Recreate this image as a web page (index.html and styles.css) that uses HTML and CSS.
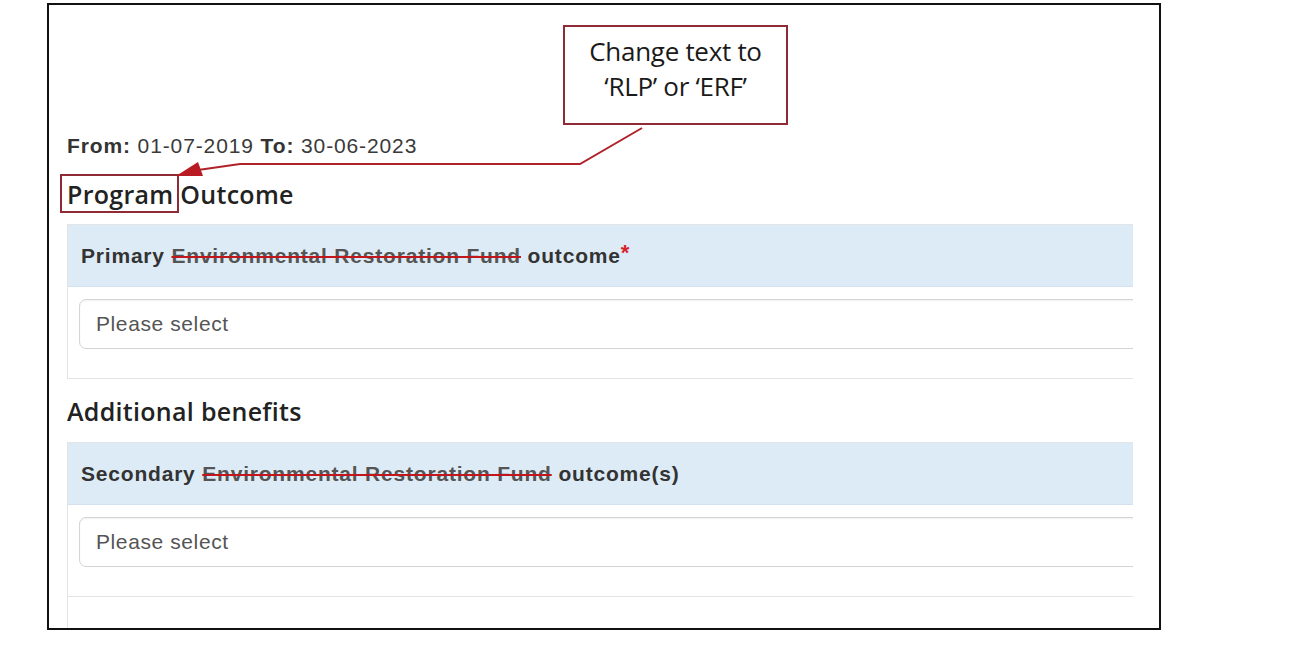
FILE: index.html
```html
<!DOCTYPE html>
<html lang="en">
<head>
<meta charset="utf-8">
<title>Program Outcome</title>
<link rel="stylesheet" href="styles.css">
</head>
<body>
<div class="frame">
  <div class="content">
    <p class="dates"><b>From:</b> 01-07-2019 <b>To:</b> 30-06-2023</p>
    <h2 class="heading">Program Outcome</h2>
    <div class="panel">
      <div class="panel-head"><span>Primary <s class="struck">Environmental Restoration Fund</s> outcome</span><span class="req">*</span></div>
      <div class="panel-body">
        <div class="select">Please select</div>
      </div>
    </div>
    <h2 class="heading heading-2">Additional benefits</h2>
    <div class="panel">
      <div class="panel-head"><span>Secondary <s class="struck">Environmental Restoration Fund</s> outcome(s)</span></div>
      <div class="panel-body">
        <div class="select">Please select</div>
      </div>
      <div class="panel-body panel-more"></div>
    </div>
  </div>
  <div class="callout">Change text to<br>‘RLP’ or ‘ERF’</div>
</div>
<svg class="annot" width="1296" height="666" viewBox="0 0 1296 666">
  <rect x="61" y="175" width="117" height="37" fill="none" stroke="#8f2a37" stroke-width="2"/>
  <polyline points="642,128 580,164 240,164 198,170" fill="none" stroke="#b0222a" stroke-width="2"/>
  <polygon points="176,176 198,162 203,176" fill="#b81c22"/>
</svg>
</body>
</html>
```

FILE: styles.css
```css
html, body {
  margin: 0;
  padding: 0;
  background: #ffffff;
}
body {
  position: relative;
  width: 1296px;
  height: 666px;
  overflow: hidden;
  font-family: "Liberation Sans", Arial, sans-serif;
  color: #333333;
}
.frame {
  position: relative;
  box-sizing: border-box;
  margin: 3px 0 0 47px;
  width: 1114px;
  height: 627px;
  border: 2px solid #111111;
  padding: 130px 0 0 18px;
  overflow: hidden;
}
.content {
  width: 1066px;
  overflow: hidden;
}
.dates {
  margin: 0;
  font-size: 21px;
  line-height: 22px;
  color: #3a3a3a;
  letter-spacing: 0.88px;
}
.dates b {
  color: #333333;
}
.heading {
  margin: 22px 0 0 0;
  font-family: "Open Sans", "Liberation Sans", sans-serif;
  font-weight: 600;
  font-size: 25px;
  line-height: 30px;
  color: #222222;
  letter-spacing: 0.3px;
}
.heading-2 {
  margin-top: 17px;
}
.panel {
  margin-top: 15px;
  width: 1110px;
  border: 1px solid #e2e4e6;
}
.heading-2 + .panel {
  margin-top: 16px;
}
.panel-head {
  display: flex;
  align-items: center;
  height: 61px;
  padding-left: 13px;
  background: #dcebf6;
  border-bottom: 1px solid #d3e2ee;
  font-weight: 700;
  font-size: 21px;
  letter-spacing: 0.8px;
  color: #333333;
}
.struck {
  text-decoration: line-through;
  text-decoration-color: #c0161c;
  text-decoration-thickness: 2px;
  color: #555555;
}
.req {
  align-self: flex-start;
  margin-top: 15px;
  color: #d8232a;
  font-size: 22px;
}
.panel-body {
  padding: 12px 11px 29px 11px;
  background: #ffffff;
}
.panel-more {
  height: 40px;
  padding: 0;
  border-top: 1px solid #e2e4e6;
}
.select {
  box-sizing: border-box;
  height: 50px;
  padding-left: 16px;
  display: flex;
  align-items: center;
  border: 1px solid #d4d4d4;
  border-radius: 7px;
  box-shadow: inset 0 1px 2px rgba(0, 0, 0, 0.06);
  font-size: 21px;
  letter-spacing: 0.6px;
  color: #555555;
}
.callout {
  position: absolute;
  left: 514px;
  top: 20px;
  box-sizing: border-box;
  width: 225px;
  height: 100px;
  border: 2px solid #8f2a37;
  padding-top: 7px;
  text-align: center;
  font-family: "Open Sans", "Liberation Sans", sans-serif;
  font-size: 26px;
  line-height: 35px;
  color: #1a1a1a;
  letter-spacing: -0.3px;
}
.annot {
  position: absolute;
  left: 0;
  top: 0;
  pointer-events: none;
}
```
